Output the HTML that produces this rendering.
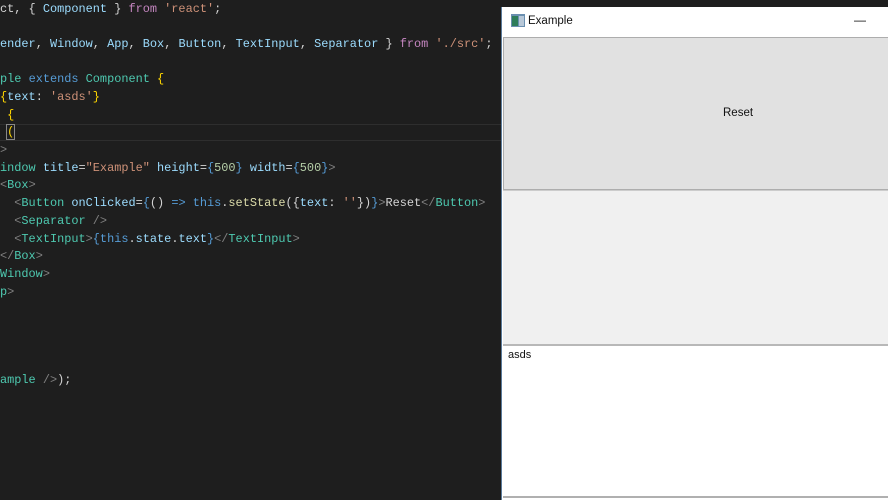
<!DOCTYPE html>
<html><head><meta charset="utf-8"><style>
*{margin:0;padding:0;box-sizing:border-box}
body{width:888px;height:500px;overflow:hidden;background:#1e1e1e;position:relative;font-family:"Liberation Mono",monospace}
.l{position:absolute;left:0;font-size:11.9px;line-height:16px;color:#9cdcfe;white-space:pre}
.k{color:#c586c0}.s{color:#ce9178}.c{color:#4ec9b0}.b{color:#569cd6}.g{color:#808080}.y{color:#ffd700}.w{color:#d4d4d4}.f{color:#dcdcaa}.n{color:#b5cea8}
.hl{position:absolute;left:0;width:502px;top:124px;height:17px;border-top:1px solid #2e2e2e;border-bottom:1px solid #2e2e2e}
.win{position:absolute;left:501px;top:7px;width:400px;height:493px;background:#fff;border-left:1px solid #5a7a9a;font-family:"Liberation Sans",sans-serif}
.title{position:absolute;left:0;top:0;width:100%;height:30px;background:#fff;font-size:11.5px;color:#111}
.btn{position:absolute;left:1px;top:30px;width:400px;height:153px;background:#e1e1e1;border:1px solid #adadad}
.sep{position:absolute;left:1px;top:183px;width:400px;height:156px;background:#f0f0f0;border-top:1px solid #ccc;border-bottom:2px solid #b8b8b8}
.inp{position:absolute;left:1px;top:339px;width:400px;height:152px;background:#fff;border-bottom:2px solid #b0b0b0;font-size:11px;color:#111}
</style></head><body>
<div class="hl"></div>
<div class="l" style="top:1px"><span class="w">ct, </span><span class="w">{ </span>Component <span class="w">}</span> <span class="k">from</span> <span class="s">'react'</span><span class="w">;</span></div>
<div class="l" style="top:36px">ender<span class="w">, </span>Window<span class="w">, </span>App<span class="w">, </span>Box<span class="w">, </span>Button<span class="w">, </span>TextInput<span class="w">, </span>Separator <span class="w">}</span> <span class="k">from</span> <span class="s">'./src'</span><span class="w">;</span></div>
<div class="l" style="top:71px"><span class="c">ple</span> <span class="b">extends</span> <span class="c">Component</span> <span class="y">{</span></div>
<div class="l" style="top:89px"><span class="y">{</span>text<span class="w">: </span><span class="s">'asds'</span><span class="y">}</span></div>
<div class="l" style="top:107px"> <span class="y">{</span></div>
<div class="l" style="top:124px"> <span class="y" style="outline:1px solid #888">(</span></div>
<div class="l" style="top:142px"><span class="g">&gt;</span></div>
<div class="l" style="top:160px"><span class="c">indow</span> title<span class="w">=</span><span class="s">"Example"</span> height<span class="w">=</span><span class="b">{</span><span class="n">500</span><span class="b">}</span> width<span class="w">=</span><span class="b">{</span><span class="n">500</span><span class="b">}</span><span class="g">&gt;</span></div>
<div class="l" style="top:177px"><span class="g">&lt;</span><span class="c">Box</span><span class="g">&gt;</span></div>
<div class="l" style="top:195px">  <span class="g">&lt;</span><span class="c">Button</span> onClicked<span class="w">=</span><span class="b">{</span><span class="w">()</span> <span class="b">=&gt;</span> <span class="b">this</span><span class="w">.</span><span class="f">setState</span><span class="w">({</span>text<span class="w">: </span><span class="s">''</span><span class="w">})</span><span class="b">}</span><span class="g">&gt;</span><span class="w">Reset</span><span class="g">&lt;/</span><span class="c">Button</span><span class="g">&gt;</span></div>
<div class="l" style="top:213px">  <span class="g">&lt;</span><span class="c">Separator</span> <span class="g">/&gt;</span></div>
<div class="l" style="top:231px">  <span class="g">&lt;</span><span class="c">TextInput</span><span class="g">&gt;</span><span class="b">{this</span><span class="w">.</span>state<span class="w">.</span>text<span class="b">}</span><span class="g">&lt;/</span><span class="c">TextInput</span><span class="g">&gt;</span></div>
<div class="l" style="top:248px"><span class="g">&lt;/</span><span class="c">Box</span><span class="g">&gt;</span></div>
<div class="l" style="top:266px"><span class="c">Window</span><span class="g">&gt;</span></div>
<div class="l" style="top:284px"><span class="c">p</span><span class="g">&gt;</span></div>
<div class="l" style="top:372px"><span class="c">ample</span> <span class="g">/&gt;</span><span class="w">);</span></div>

<div class="win">
 <div class="title">
  <svg style="position:absolute;left:9px;top:7px" width="14" height="13" viewBox="0 0 14 13"><rect x="0" y="0" width="14" height="13" fill="#6a8fb0"/><rect x="1" y="2" width="6" height="10" fill="#2e7d5a"/><rect x="8" y="2" width="5" height="10" fill="#b8c8d8"/></svg>
  <span style="position:absolute;left:26px;top:8px">Example</span>
  <span style="position:absolute;left:352px;top:6px;font-size:12px">—</span>
 </div>
 <div class="btn"><span style="position:absolute;left:219px;top:69px;font-size:11.5px;color:#111">Reset</span></div>
 <div class="sep"></div>
 <div class="inp"><span style="position:absolute;left:5px;top:3px">asds</span></div>
</div>
</body></html>
